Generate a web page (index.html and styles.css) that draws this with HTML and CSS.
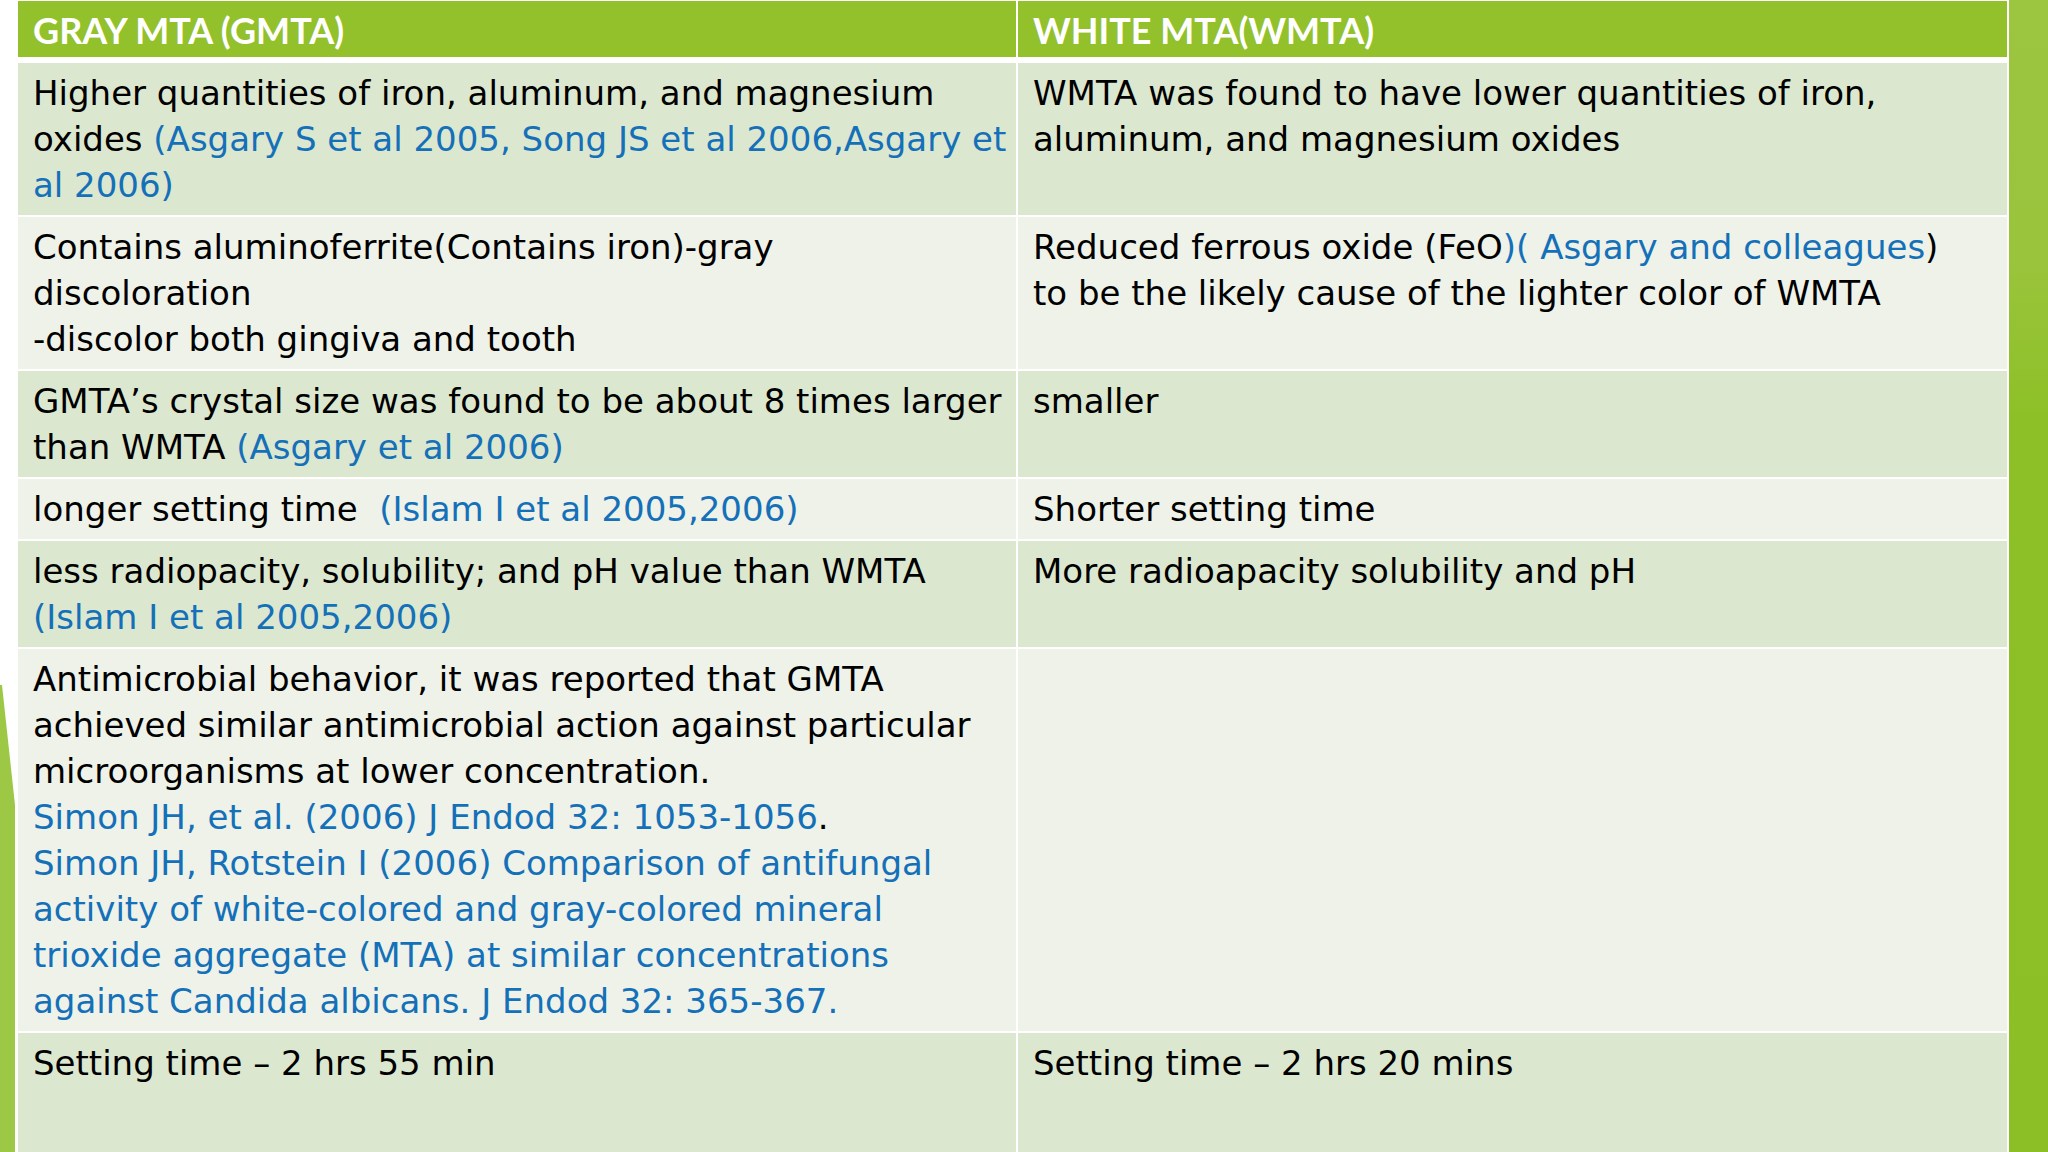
FILE: index.html
```html
<!DOCTYPE html>
<html lang="en">
<head>
<meta charset="utf-8">
<title>GMTA vs WMTA</title>
<link rel="stylesheet" href="styles.css">
</head>
<body>
<div class="slide">
  <svg class="wedge" width="18" height="1152" viewBox="0 0 18 1152" aria-hidden="true">
    <polygon points="0,685 2,685 15,805 15,1152 0,1152" fill="#9dc846"/>
  </svg>
  <div class="table">
    <div class="row head">
      <div class="cell">GRAY MTA (GMTA)</div>
      <div class="cell">WHITE MTA(WMTA)</div>
    </div>
    <div class="row odd">
      <div class="cell">Higher quantities of iron, aluminum, and magnesium<br>oxides <span class="ref">(Asgary S et al 2005, Song JS et al 2006,Asgary et</span><br><span class="ref">al 2006)</span></div>
      <div class="cell">WMTA was found to have lower quantities of iron,<br>aluminum, and magnesium oxides</div>
    </div>
    <div class="row even">
      <div class="cell">Contains aluminoferrite(Contains iron)-gray<br>discoloration<br>-discolor both gingiva and tooth</div>
      <div class="cell">Reduced ferrous oxide (FeO<span class="ref">)( Asgary and colleagues</span>)<br>to be the likely cause of the lighter color of WMTA</div>
    </div>
    <div class="row odd">
      <div class="cell">GMTA’s crystal size was found to be about 8 times larger<br>than WMTA <span class="ref">(Asgary et al 2006)</span></div>
      <div class="cell">smaller</div>
    </div>
    <div class="row even">
      <div class="cell">longer setting time&nbsp; <span class="ref">(Islam I et al 2005,2006)</span></div>
      <div class="cell">Shorter setting time</div>
    </div>
    <div class="row odd">
      <div class="cell">less radiopacity, solubility; and pH value than WMTA<br><span class="ref">(Islam I et al 2005,2006)</span></div>
      <div class="cell">More radioapacity solubility and pH</div>
    </div>
    <div class="row even">
      <div class="cell">Antimicrobial behavior, it was reported that GMTA<br>achieved similar antimicrobial action against particular<br>microorganisms at lower concentration.<br><span class="ref">Simon JH, et al. (2006) J Endod 32: 1053-1056</span>.<br><span class="ref">Simon JH, Rotstein I (2006) Comparison of antifungal<br>activity of white-colored and gray-colored mineral<br>trioxide aggregate (MTA) at similar concentrations<br>against Candida albicans. J Endod 32: 365-367.</span></div>
      <div class="cell"></div>
    </div>
    <div class="row odd last">
      <div class="cell">Setting time – 2 hrs 55 min</div>
      <div class="cell">Setting time – 2 hrs 20 mins</div>
    </div>
  </div>
  <div class="bar"></div>
</div>
</body>
</html>
```
FILE: styles.css
```css
html, body {
  margin: 0;
  padding: 0;
  background: #ffffff;
}

.slide {
  position: relative;
  width: 2048px;
  height: 1152px;
  overflow: hidden;
  display: flex;
  background: #ffffff;
}

.wedge {
  position: absolute;
  left: 0;
  top: 0;
}

.table {
  margin-left: 18px;
  width: 1989px;
  padding-top: 1px;
  display: flex;
  flex-direction: column;
  gap: 2px;
}

.row {
  display: grid;
  grid-template-columns: 998px 989px;
  column-gap: 2px;
}

.cell {
  padding: 7px 15px 7px 15px;
  font-family: "DejaVu Sans", "Verdana", sans-serif;
  font-size: 34px;
  line-height: 46px;
  letter-spacing: 0;
  color: #000000;
  white-space: nowrap;
  overflow: hidden;
}

.head {
  margin-bottom: 4px;
}

.head .cell {
  background: #93c12b;
  color: #ffffff;
  font-family: "Lato", "DejaVu Sans", sans-serif;
  font-weight: 700;
  font-size: 36px;
  letter-spacing: 0;
  padding: 6px 15px 4px 15px;
}

.odd .cell {
  background: #dce7cf;
}

.even .cell {
  background: #eef2e8;
}

.last {
  flex: 1;
}

.ref {
  color: #1470b8;
}

.bar {
  margin-left: 2px;
  flex: 1;
  background: linear-gradient(to bottom, #9cc540 0px, #9ac43c 260px, #8dc027 420px, #8cbf26 1152px);
}
```
